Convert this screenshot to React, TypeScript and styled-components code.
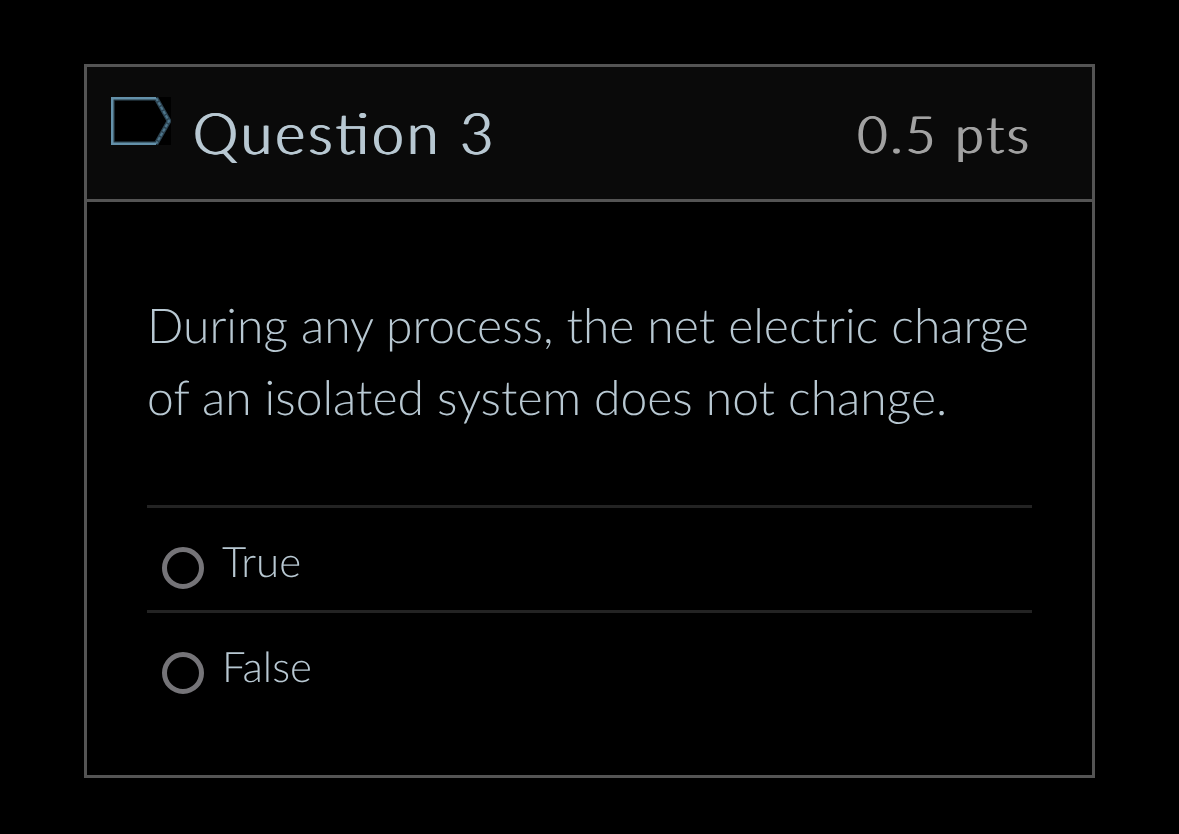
import styled, { createGlobalStyle } from 'styled-components'

const GlobalStyle = createGlobalStyle`
    * {
        box-sizing: border-box;
    }

    body {
        margin: 0;
        background: #000;
        font-family: Lato, sans-serif;
        text-rendering: geometricPrecision;
    }
`

const Page = styled.main`
    height: 834px;
    padding: 64px 84px 0;
`

const Card = styled.section`
    width: 1011px;
    height: 714px;
    border: 3px solid #545454;
    will-change: transform;
`

const Header = styled.header`
    display: flex;
    align-items: flex-start;
    height: 135px;
    padding: 30px 61px 0 24px;
    border-bottom: 3px solid #545454;
    background: #0a0a0a;
`

const Flag = styled.svg`
    display: block;
    flex: none;
    width: 60px;
    height: 48px;
    margin-right: 21px;
`

// light face thickened sideways only
const Title = styled.h2`
    flex: 1;
    margin: 0;
    color: #b8c8d2;
    font-size: 57px;
    font-weight: 300;
    line-height: 72px;
    letter-spacing: 3.2px;
    font-feature-settings: 'liga' 1;
    text-shadow: 1px 0 #b8c8d2, 2px 0 #b8c8d2;
    white-space: nowrap;
`

const Points = styled.span`
    color: #a2a2a2;
    font-size: 51.3px;
    font-weight: 300;
    line-height: 72px;
    letter-spacing: 3.1px;
    text-shadow: 1px 0 #a2a2a2, 2px 0 #a2a2a2;
    white-space: nowrap;
`

const Body = styled.div`
    padding: 88px 60px 0;
`

const Prompt = styled.p`
    margin: 0 0 71px;
    color: #b8c8d2;
    font-size: 48px;
    font-weight: 300;
    line-height: 72px;
    white-space: nowrap;
`

const Answer = styled.label`
    display: flex;
    align-items: flex-start;
    height: 105px;
    padding: 26px 15px 0;
    border-top: 3px solid #232323;
    color: #b8c8d2;
    font-size: 42px;
    font-weight: 300;
    line-height: 54px;
`

const Radio = styled.input`
    appearance: none;
    flex: none;
    width: 42px;
    height: 42px;
    margin: 13px 18px 0 0;
    border: 5px solid #757478;
    border-radius: 50%;
`

const answers = ['True', 'False']

const App = (): JSX.Element => (
    <Page>
        <GlobalStyle />
        <Card>
            <Header>
                <Flag viewBox='0 0 60 48'>
                    <path d='M0 0h60v48H0z' fill='#000' />
                    <path
                        d='M45 1L58 24L45 47'
                        fill='none'
                        stroke='#2c4351'
                        strokeWidth='4.6'
                    />
                    <path
                        d='M45 1L58 24L45 47'
                        fill='none'
                        stroke='#4d758b'
                        strokeWidth='2.2'
                        strokeDasharray='3.5 1.5'
                    />
                    <path
                        d='M45 1.9H1.9V46.1H45'
                        fill='none'
                        stroke='#23343e'
                        strokeWidth='3.8'
                    />
                    <path
                        d='M45 1.25H1.25V46.75H45'
                        fill='none'
                        stroke='#6491aa'
                        strokeWidth='2.5'
                    />
                </Flag>
                <Title>Question 3</Title>
                <Points>0.5 pts</Points>
            </Header>
            <Body>
                <Prompt>
                    During any process, the net electric charge
                    <br />
                    of an isolated system does not change.
                </Prompt>
                {answers.map((answer) => (
                    <Answer key={answer}>
                        <Radio type='radio' name='answer' />
                        {answer}
                    </Answer>
                ))}
            </Body>
        </Card>
    </Page>
)

export default App
